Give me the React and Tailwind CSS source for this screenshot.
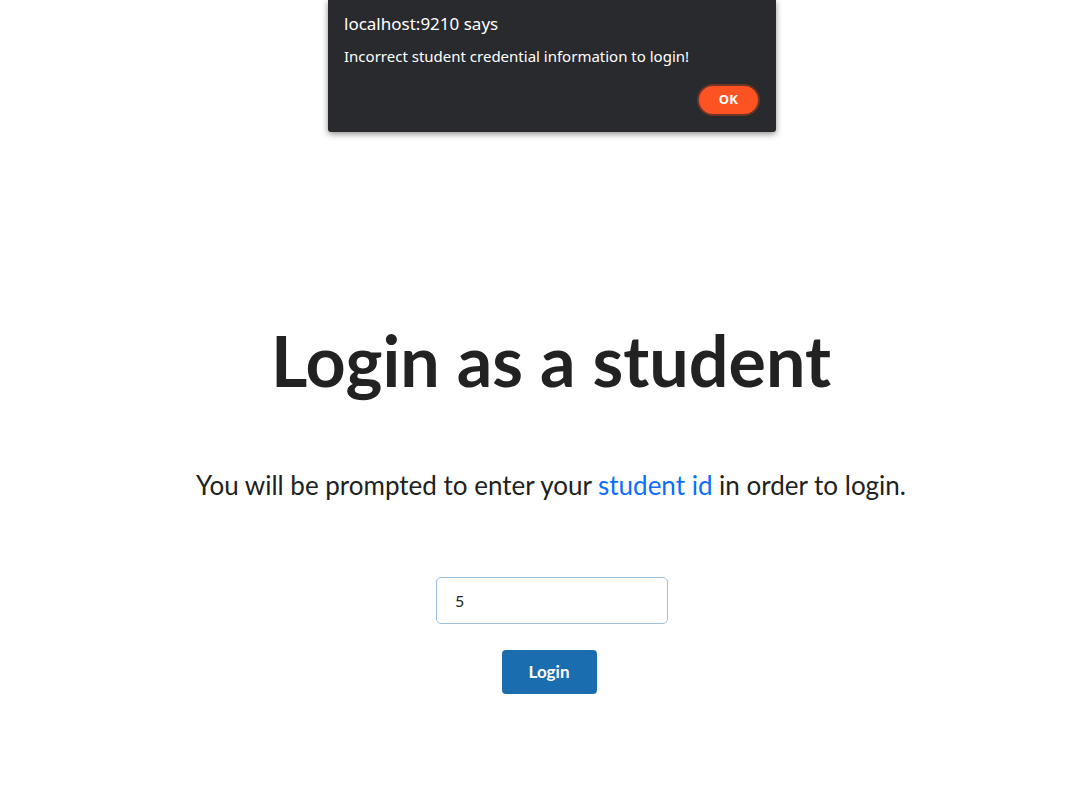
import React from 'react';

export default function App() {
  return (
    <div className="relative min-h-[797px] w-full bg-white font-['Lato','Liberation_Sans',sans-serif] text-[#212529]">
      {/* Browser alert */}
      <div className="absolute left-[328px] top-0 z-10 h-[132px] w-[448px] rounded-b-[3px] bg-[#292a2d] font-['Noto_Sans','Open_Sans',sans-serif] text-white shadow-[0_2px_6px_rgba(0,0,0,0.45)]">
        <div className="px-4 pt-[12px] text-[17px] leading-[24px]">localhost:9210 says</div>
        <div className="px-4 pt-[10px] text-[15px] leading-[20px]">Incorrect student credential information to login!</div>
        <div className="flex justify-end px-[16px] pt-[18px]">
          <button className="h-[32px] w-[63px] rounded-full border-2 border-[#6b3528] bg-[#fd5221] text-[13px] font-bold tracking-wide text-white">
            OK
          </button>
        </div>
      </div>

      {/* Page content */}
      <div className="flex flex-col items-center pl-[24px] pt-[317px]">
        <h1 className="text-[70px] font-bold leading-[86px] text-[#222222]">Login as a student</h1>
        <p className="mt-[64px] text-[26px] leading-[36px] text-[#212121]">
          You will be prompted to enter your <span className="text-[#0d6efd]">student id</span> in order to login.
        </p>
        <input
          defaultValue="5"
          className="mt-[74px] ml-[2px] h-[47px] w-[232px] rounded-[5px] border border-[#9ec0e0] px-[18px] text-[16px] text-[#212529] outline-none"
        />
        <button className="mt-[26px] mr-[4px] h-[44px] w-[95px] rounded-[4px] bg-[#1a6daf] text-[17px] font-bold text-white">
          Login
        </button>
      </div>
    </div>
  );
}
